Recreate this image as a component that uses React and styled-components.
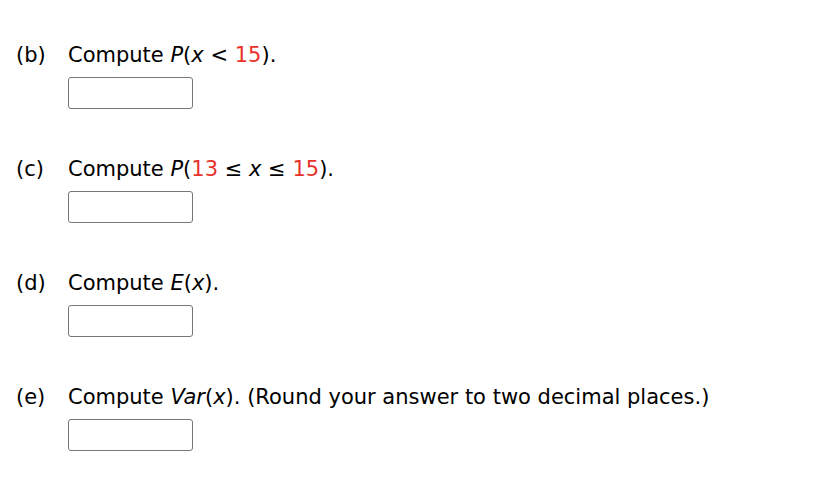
import React from "react";
import styled, { createGlobalStyle } from "styled-components";

const Global = createGlobalStyle`
  html, body { margin: 0; padding: 0; background: #fff; }
  body { font-family: Verdana, "DejaVu Sans", sans-serif; color: #000; }
`;

const Page = styled.div`
  display: flex;
  flex-direction: column;
  padding: 42px 0 0 16px;
`;

const Part = styled.section`
  display: grid;
  grid-template-columns: 52px auto;
  row-gap: 8px;
  height: 114px;
  align-content: start;
`;

const Label = styled.span`
  font-size: 21px;
  line-height: 27px;
`;

const Question = styled.p`
  margin: 0;
  font-size: 21px;
  line-height: 27px;
  white-space: nowrap;
`;

const Red = styled.span`
  color: #e8332a;
`;

const Answer = styled.input`
  grid-column: 2;
  box-sizing: border-box;
  width: 125px;
  height: 32px;
  border: 1px solid #777;
  border-radius: 3px;
  background: #fff;
  outline: none;
  padding: 0 6px;
  font-size: 16px;
`;

const parts = [
  { label: "(b)", q: <>Compute <i>P</i>(<i>x</i> &lt; <Red>15</Red>).</> },
  { label: "(c)", q: <>Compute <i>P</i>(<Red>13</Red> ≤ <i>x</i> ≤ <Red>15</Red>).</> },
  { label: "(d)", q: <>Compute <i>E</i>(<i>x</i>).</> },
  { label: "(e)", q: <>Compute <i>Var</i>(<i>x</i>). (Round your answer to two decimal places.)</> },
];

export default function App() {
  return (
    <>
      <Global />
      <Page>
        {parts.map((p) => (
          <Part key={p.label}>
            <Label>{p.label}</Label>
            <Question>{p.q}</Question>
            <Answer type="text" />
          </Part>
        ))}
      </Page>
    </>
  );
}
